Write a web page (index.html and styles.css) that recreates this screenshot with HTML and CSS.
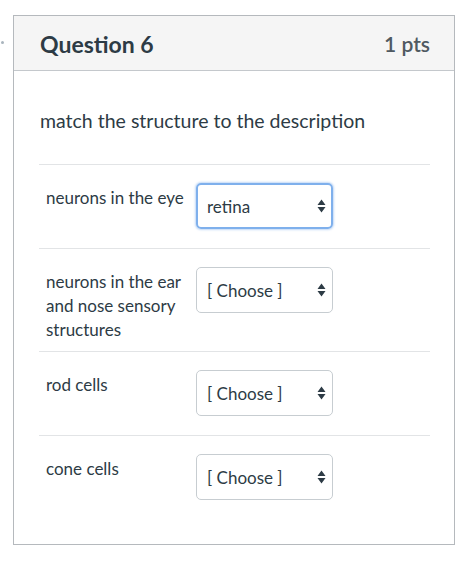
FILE: index.html
```html
<!DOCTYPE html>
<html>
<head>
<meta charset="utf-8">
<link rel="stylesheet" href="styles.css">
</head>
<body>
<span class="dot"></span>
<div class="card">
  <div class="card-header">
    <span class="q-title">Question 6</span>
    <span class="q-pts">1 pts</span>
  </div>
  <div class="card-body">
    <p class="prompt">match the structure to the description</p>
    <div class="rows">
      <div class="row">
        <div class="label">neurons in the eye</div>
        <div class="select focused"><span>retina</span><svg class="arrows" width="9" height="14" viewBox="0 0 9 14"><path d="M4.5 0.5 L8.5 6 L0.5 6 Z M0.5 8 L8.5 8 L4.5 13.5 Z" fill="#2d3b45"/></svg></div>
      </div>
      <div class="row">
        <div class="label">neurons in the ear and nose sensory structures</div>
        <div class="select"><span>[ Choose ]</span><svg class="arrows" width="9" height="14" viewBox="0 0 9 14"><path d="M4.5 0.5 L8.5 6 L0.5 6 Z M0.5 8 L8.5 8 L4.5 13.5 Z" fill="#2d3b45"/></svg></div>
      </div>
      <div class="row">
        <div class="label">rod cells</div>
        <div class="select"><span>[ Choose ]</span><svg class="arrows" width="9" height="14" viewBox="0 0 9 14"><path d="M4.5 0.5 L8.5 6 L0.5 6 Z M0.5 8 L8.5 8 L4.5 13.5 Z" fill="#2d3b45"/></svg></div>
      </div>
      <div class="row">
        <div class="label">cone cells</div>
        <div class="select"><span>[ Choose ]</span><svg class="arrows" width="9" height="14" viewBox="0 0 9 14"><path d="M4.5 0.5 L8.5 6 L0.5 6 Z M0.5 8 L8.5 8 L4.5 13.5 Z" fill="#2d3b45"/></svg></div>
      </div>
    </div>
  </div>
</div>
</body>
</html>
```
FILE: styles.css
```css
html, body {
  margin: 0;
  padding: 0;
  background: #ffffff;
}
body {
  font-family: Lato, "Noto Sans", sans-serif;
  color: #2d3b45;
  position: relative;
  width: 474px;
  height: 565px;
  overflow: hidden;
}
.dot {
  position: absolute;
  left: 1px;
  top: 41px;
  width: 3px;
  height: 3px;
  border-radius: 50%;
  background: #a9b4bd;
}
.card {
  margin: 15px 0 0 13px;
  width: 440px;
  border: 1px solid #b5b9bd;
}
.card-header {
  background: #f5f5f5;
  border-bottom: 1px solid #c4c8cc;
  height: 54px;
  display: flex;
  align-items: center;
  justify-content: space-between;
  padding: 0 24px 0 26px;
}
.q-title {
  font-size: 23px;
  font-weight: 700;
  color: #2d3b45;
  margin-top: 1px;
}
.q-pts {
  font-size: 21px;
  font-weight: 600;
  color: #4f5961;
  margin-top: 1px;
}
.card-body {
  padding: 0 24px 25px 25px;
}
.prompt {
  margin: 0;
  padding: 38px 0 31px 1px;
  font-size: 19.5px;
  line-height: 24px;
}
.row {
  display: flex;
  border-top: 1px solid #e2e4e6;
  padding: 18px 0 19px 7px;
  align-items: flex-start;
}
.row:nth-child(2) {
  padding-bottom: 9px;
}
.label {
  width: 140px;
  margin-right: 10px;
  font-size: 17px;
  line-height: 24px;
  padding-top: 3px;
}
.select {
  box-sizing: border-box;
  width: 137px;
  height: 46px;
  border: 1px solid #c7cdd1;
  border-radius: 5px;
  display: flex;
  align-items: center;
  justify-content: space-between;
  padding: 0 6px 0 10px;
  font-size: 17px;
  color: #2d3b45;
}
.select span {
  margin-top: 1px;
}
.select.focused {
  border: 2px solid #7fb0ec;
  box-shadow: 0 0 2px 1px rgba(120, 170, 235, 0.45);
  padding-left: 9px;
  padding-right: 5px;
}
.arrows {
  display: block;
}
```
